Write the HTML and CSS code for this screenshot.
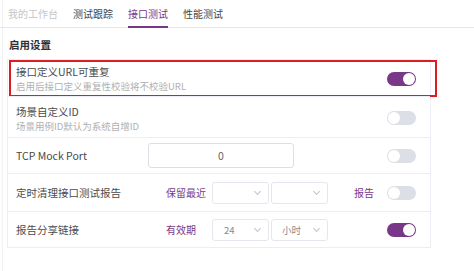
FILE: index.html
```html
<!DOCTYPE html>
<html lang="zh-CN">
<head>
<meta charset="utf-8">
<title>接口测试设置</title>
<link rel="stylesheet" href="styles.css">
</head>
<body>
<div class="page">
  <div class="tabs">
    <span class="tab tab-muted">我的工作台</span>
    <span class="tab">测试跟踪</span>
    <span class="tab tab-active">接口测试</span>
    <span class="tab">性能测试</span>
  </div>
  <div class="content">
    <div class="section-title">启用设置</div>
    <div class="card">
      <div class="row row-first">
        <div class="label">
          <div class="title">接口定义URL可重复</div>
          <div class="desc">启用后接口定义重复性校验将不校验URL</div>
        </div>
        <span class="switch on"></span>
        <div class="highlight"></div>
      </div>
      <div class="row row-second">
        <div class="label">
          <div class="title">场景自定义ID</div>
          <div class="desc">场景用例ID默认为系统自增ID</div>
        </div>
        <span class="switch"></span>
      </div>
      <div class="row row-third">
        <div class="label label-fixed"><div class="title">TCP Mock Port</div></div>
        <div class="input input-wide">0</div>
        <span class="switch"></span>
      </div>
      <div class="row row-fourth">
        <div class="label label-fixed"><div class="title">定时清理接口测试报告</div></div>
        <span class="prefix">保留最近</span>
        <div class="select"><span class="value"></span><span class="chev"></span></div>
        <div class="select"><span class="value"></span><span class="chev"></span></div>
        <span class="suffix">报告</span>
        <span class="switch"></span>
      </div>
      <div class="row row-fifth">
        <div class="label label-fixed"><div class="title">报告分享链接</div></div>
        <span class="prefix">有效期</span>
        <div class="select select-input"><span class="value">24</span><span class="chev"></span></div>
        <div class="select"><span class="value">小时</span><span class="chev"></span></div>
        <span class="switch on push"></span>
      </div>
    </div>
  </div>
</div>
</body>
</html>
```
FILE: styles.css
```css
* { box-sizing: border-box; }
html, body { margin: 0; padding: 0; background: #fff; }
body {
  font-family: "Noto Sans CJK SC", "Noto Sans", sans-serif;
  color: #303133;
  width: 474px;
  height: 271px;
  overflow: hidden;
}
.page {
  margin-left: 2px;
  border-left: 1px solid #f2f2f2;
  height: 271px;
}
.tabs {
  display: flex;
  height: 28px;
  align-items: stretch;
  gap: 15px;
  border-bottom: 1px solid #e6e6e6;
  margin-left: -3px;
  padding-left: 8px;
}
.tab {
  font-size: 10px;
  line-height: 28px;
  color: #444;
  position: relative;
}
.tab-muted { color: #c6c6c6; }
.tab-active { color: #783887; }
.tab-active::after {
  content: "";
  position: absolute;
  left: 0; right: 0; bottom: -1px;
  height: 2px;
  background: #783887;
}
.content { padding-left: 4px; }
.section-title {
  font-size: 10.5px;
  font-weight: 700;
  line-height: 14px;
  padding: 10px 0 7px 2px;
  color: #303133;
}
.card {
  width: 424px;
  border: 1px solid #ebeef5;
}
.row {
  position: relative;
  display: flex;
  align-items: center;
  padding: 0 14px 0 8px;
  border-top: 1px solid #ebeef5;
}
.row-first { border-top: none; height: 36px; padding-top: 1px; }
.row-second { height: 41px; padding-top: 2px; }
.row-third { height: 36px; }
.row-fourth { height: 38px; }
.row-fifth { height: 36px; }
.label { flex: 1; }
.label-fixed { flex: 0 0 132px; }
.title {
  font-size: 10.5px;
  line-height: 15px;
  color: #4a4a4a;
}
.desc {
  font-size: 9.5px;
  line-height: 14px;
  color: #b0b0b0;
}
.switch {
  flex: 0 0 29px;
  width: 29px;
  height: 14px;
  border-radius: 7px;
  background: #dcdfe6;
  position: relative;
}
.switch::after {
  content: "";
  position: absolute;
  top: 1px; left: 1px;
  width: 12px; height: 12px;
  border-radius: 50%;
  background: #fff;
}
.switch.on { background: #783887; }
.switch.on::after { left: 16px; }
.push { margin-left: auto; }
.input {
  border: 1px solid #dcdfe6;
  border-radius: 3px;
  height: 25px;
  font-size: 10.5px;
  line-height: 23px;
  text-align: center;
  color: #606266;
}
.input-wide { width: 146px; margin-right: auto; }
.prefix {
  width: 46px;
  flex: 0 0 46px;
  font-size: 10px;
  color: #783887;
  margin-left: 18px;
  line-height: 14px;
}
.select {
  width: 57px;
  height: 22px;
  border: 1px solid #e4e7ed;
  border-radius: 3px;
  margin-right: 2px;
  display: flex;
  align-items: center;
  padding: 0 8px 0 10px;
  font-size: 9.5px;
  color: #8a8a8a;
}
.select .value { flex: 1; }
.select-input .value { padding-left: 1px; }
.chev {
  width: 5px; height: 5px;
  border-right: 1px solid #c0c4cc;
  border-bottom: 1px solid #c0c4cc;
  transform: rotate(45deg);
  margin-top: -3px;
}
.suffix {
  margin-left: auto;
  margin-right: 13px;
  font-size: 10px;
  color: #783887;
}
.highlight {
  position: absolute;
  left: 1px;
  top: 0;
  width: 428px;
  height: 37px;
  border: 2px solid #e01b24;
  pointer-events: none;
}
```
